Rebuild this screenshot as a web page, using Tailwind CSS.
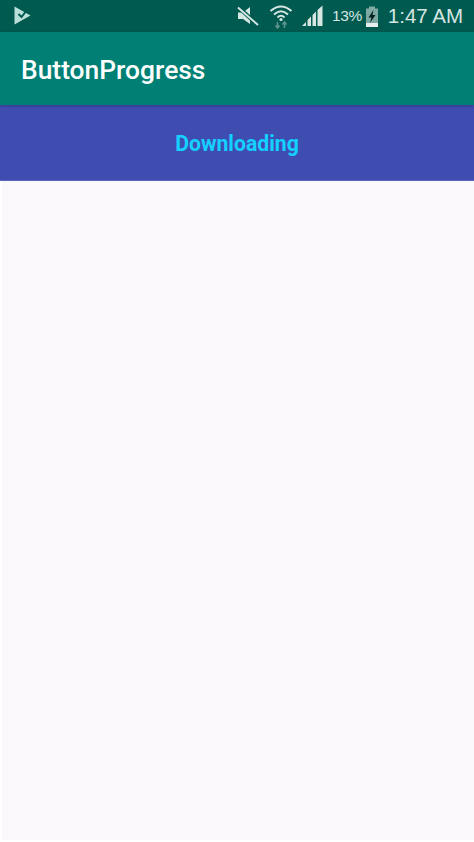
<!DOCTYPE html>
<html>
<head>
<meta charset="utf-8">
<script src="https://cdn.jsdelivr.net/npm/@tailwindcss/browser@4"></script>
</head>
<body class="bg-white font-['Roboto',sans-serif]">
<div class="w-[474px] h-[842px] flex flex-col overflow-hidden bg-white">
  <div class="h-[32px] bg-[#005a4f] flex items-center pl-[14px] pr-[11px] shrink-0">
    <svg width="17" height="19" viewBox="0 0 17 19" class="mb-[1px]"><path d="M0.5 0.5 L16.5 9.5 L0.5 18.5 Z" fill="#b9dfdb"/><path d="M4.5 8 L7.5 11 L13 4" fill="none" stroke="#005a4f" stroke-width="2"/></svg>
    <div class="ml-auto flex items-center">
      <svg width="22" height="20" viewBox="0 0 22 20" class="mr-[10px]"><path d="M1 6.5 H6 L13 1 V18 L6 13 H1 Z" fill="#d5e6e3"/><path d="M1 1 L21 19" stroke="#005a4f" stroke-width="4"/><path d="M1 1.5 L21 19" stroke="#d5e6e3" stroke-width="2"/></svg>
      <svg width="24" height="25" viewBox="0 0 24 25" class="mr-[9px]"><path d="M1.5 7 Q12 -2 22.5 7" fill="none" stroke="#d5e6e3" stroke-width="2"/><path d="M5 10.5 Q12 4 19 10.5" fill="none" stroke="#d5e6e3" stroke-width="2"/><path d="M8.5 13.5 Q12 10 15.5 13.5" fill="none" stroke="#d5e6e3" stroke-width="2"/><circle cx="12" cy="15.5" r="1.6" fill="#d5e6e3"/><path d="M8.5 18 V24 M6.5 21.5 L8.5 24 L10.5 21.5 M15.5 24 V18 M13.5 20.5 L15.5 18 L17.5 20.5" fill="none" stroke="#5f958e" stroke-width="1.5"/></svg>
      <svg width="21" height="22" viewBox="0 0 21 22" class="mr-[9px]"><path d="M0 21 L4 17 V21 Z M5.5 21 V15 L9 11.5 V21 Z M10.5 21 V10 L14 6.5 V21 Z M15.5 21 V5 L20.5 0.5 V21 Z" fill="#d5e6e3"/></svg>
      <span class="text-[15.5px] leading-[20px] text-[#d5e6e3] font-['Liberation_Sans',sans-serif] tracking-[-0.4px]">13%</span>
      <svg width="14" height="21" viewBox="0 0 14 21" class="ml-[3px] mr-[9px]"><path d="M4 0.5 H10 V2.5 H13 V21 H1 V2.5 H4 Z" fill="#7fa9a3"/><rect x="1" y="17" width="12" height="4" fill="#e4efed"/><path d="M8.5 4 L3.5 11.5 H6.5 L5 17 L10.5 9 H7.5 Z" fill="#04211d"/></svg>
      <span class="text-[20.5px] leading-[24px] text-[#d5e6e3] font-['Liberation_Sans',sans-serif]">1:47 AM</span>
    </div>
  </div>
  <div class="h-[73px] bg-[#008074] flex items-center pl-[21px] pt-[2px] shrink-0 z-10 shadow-[0_1px_3px_rgba(0,0,0,0.25)]">
    <span class="text-[26.4px] leading-[32px] font-medium text-white">ButtonProgress</span>
  </div>
  <div class="h-[76px] bg-[#3f4db1] flex items-center justify-center pt-[3px] shrink-0 border-b border-[#5a66bd]">
    <span class="text-[21.2px] leading-[28px] font-bold text-[#14d0ff]">Downloading</span>
  </div>
  <div class="flex-1 bg-[#faf8fb] ml-[2px] mb-[2px]"></div>
</div>
</body>
</html>
